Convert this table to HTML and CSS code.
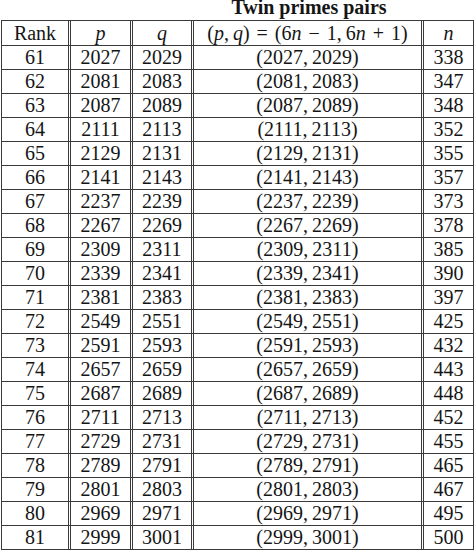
FILE: index.html
```html
<!DOCTYPE html>
<html>
<head>
<meta charset="utf-8">
<link rel="stylesheet" href="styles.css">
</head>
<body>
<div class="sheet">
  <div class="title-row">
    <div class="title">Twin primes pairs</div>
  </div>
  <div class="grid">
    <div class="c h c1">Rank</div>
    <div class="c h"><i>p</i></div>
    <div class="c h"><i>q</i></div>
    <div class="c h">(<i>p</i>,&#8201;<i>q</i>) <span class="op">=</span> (6<i>n</i> <span class="op">−</span> 1,&#8201;6<i>n</i> <span class="op">+</span> 1)</div>
    <div class="c h c5"><i>n</i></div>

    <div class="c c1">61</div><div class="c">2027</div><div class="c">2029</div><div class="c">(2027,&#8201;2029)</div><div class="c c5">338</div>
    <div class="c c1">62</div><div class="c">2081</div><div class="c">2083</div><div class="c">(2081,&#8201;2083)</div><div class="c c5">347</div>
    <div class="c c1">63</div><div class="c">2087</div><div class="c">2089</div><div class="c">(2087,&#8201;2089)</div><div class="c c5">348</div>
    <div class="c c1">64</div><div class="c">2111</div><div class="c">2113</div><div class="c">(2111,&#8201;2113)</div><div class="c c5">352</div>
    <div class="c c1">65</div><div class="c">2129</div><div class="c">2131</div><div class="c">(2129,&#8201;2131)</div><div class="c c5">355</div>
    <div class="c c1">66</div><div class="c">2141</div><div class="c">2143</div><div class="c">(2141,&#8201;2143)</div><div class="c c5">357</div>
    <div class="c c1">67</div><div class="c">2237</div><div class="c">2239</div><div class="c">(2237,&#8201;2239)</div><div class="c c5">373</div>
    <div class="c c1">68</div><div class="c">2267</div><div class="c">2269</div><div class="c">(2267,&#8201;2269)</div><div class="c c5">378</div>
    <div class="c c1">69</div><div class="c">2309</div><div class="c">2311</div><div class="c">(2309,&#8201;2311)</div><div class="c c5">385</div>
    <div class="c c1">70</div><div class="c">2339</div><div class="c">2341</div><div class="c">(2339,&#8201;2341)</div><div class="c c5">390</div>
    <div class="c c1">71</div><div class="c">2381</div><div class="c">2383</div><div class="c">(2381,&#8201;2383)</div><div class="c c5">397</div>
    <div class="c c1">72</div><div class="c">2549</div><div class="c">2551</div><div class="c">(2549,&#8201;2551)</div><div class="c c5">425</div>
    <div class="c c1">73</div><div class="c">2591</div><div class="c">2593</div><div class="c">(2591,&#8201;2593)</div><div class="c c5">432</div>
    <div class="c c1">74</div><div class="c">2657</div><div class="c">2659</div><div class="c">(2657,&#8201;2659)</div><div class="c c5">443</div>
    <div class="c c1">75</div><div class="c">2687</div><div class="c">2689</div><div class="c">(2687,&#8201;2689)</div><div class="c c5">448</div>
    <div class="c c1">76</div><div class="c">2711</div><div class="c">2713</div><div class="c">(2711,&#8201;2713)</div><div class="c c5">452</div>
    <div class="c c1">77</div><div class="c">2729</div><div class="c">2731</div><div class="c">(2729,&#8201;2731)</div><div class="c c5">455</div>
    <div class="c c1">78</div><div class="c">2789</div><div class="c">2791</div><div class="c">(2789,&#8201;2791)</div><div class="c c5">465</div>
    <div class="c c1">79</div><div class="c">2801</div><div class="c">2803</div><div class="c">(2801,&#8201;2803)</div><div class="c c5">467</div>
    <div class="c c1">80</div><div class="c">2969</div><div class="c">2971</div><div class="c">(2969,&#8201;2971)</div><div class="c c5">495</div>
    <div class="c c1">81</div><div class="c">2999</div><div class="c">3001</div><div class="c">(2999,&#8201;3001)</div><div class="c c5">500</div>
  </div>
</div>
</body>
</html>
```

FILE: styles.css
```css
html, body {
  margin: 0;
  padding: 0;
  background: #ffffff;
}

.sheet {
  padding-left: 1px;
  font-family: "Liberation Serif", "Times New Roman", serif;
  font-size: 20px;
  color: #151515;
}

.title-row {
  display: grid;
  grid-template-columns: 70px 62px 61px 230px 50px;
  height: 20px;
}

.title {
  grid-column: 4;
  text-align: center;
  font-weight: bold;
  line-height: 15px;
  white-space: nowrap;
}

.grid {
  display: grid;
  grid-template-columns: 70px 62px 61px 230px 50px;
}

.c {
  box-sizing: border-box;
  height: 24px;
  line-height: 22px;
  text-align: center;
  white-space: nowrap;
  border-bottom: 1px solid #3a3a3a;
  border-right: 3px double #3a3a3a;
}

.c i {
  font-style: italic;
}

.op {
  margin: 0 2px;
}

.c1 {
  border-left: 1px solid #3a3a3a;
}

.c5 {
  border-right: 1px solid #3a3a3a;
}

.h {
  height: 26px;
  line-height: 24px;
  border-top: 1px solid #3a3a3a;
}
```
